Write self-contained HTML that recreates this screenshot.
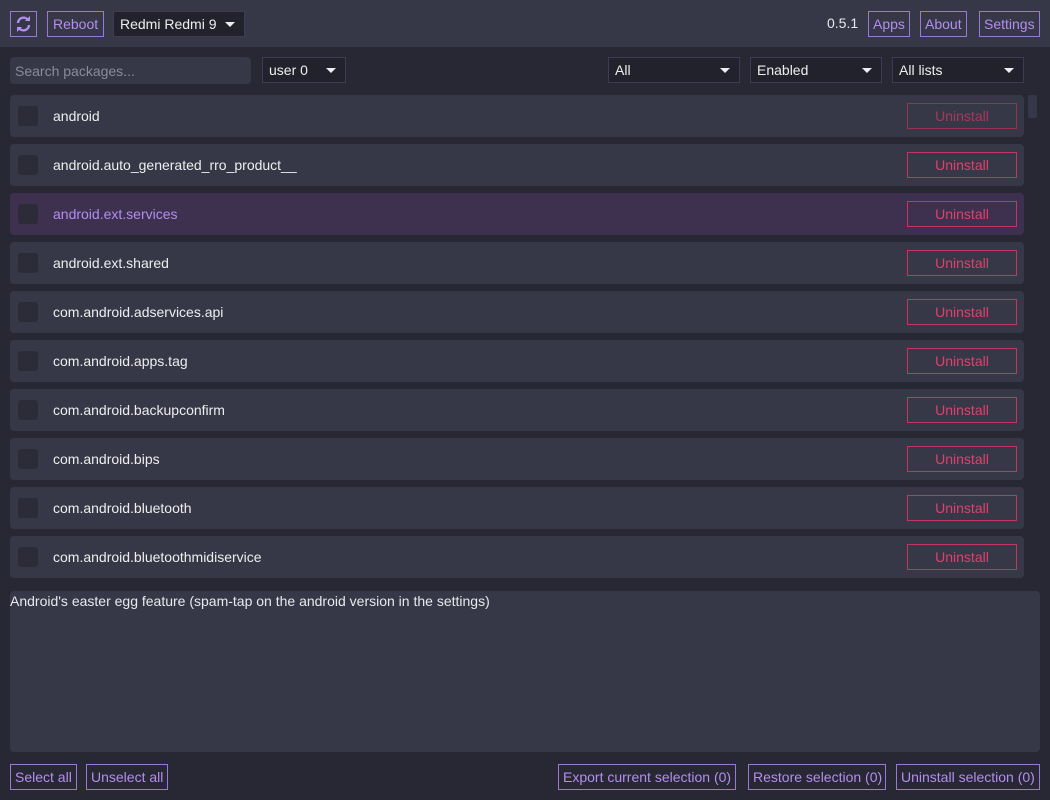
<!DOCTYPE html>
<html><head><style>
*{box-sizing:border-box;margin:0;padding:0}
body{width:1050px;height:800px;background:#272833;font-family:"Liberation Sans",sans-serif;font-size:14px;color:#e8e8ee;position:relative;overflow:hidden}
.abs{position:absolute}
.hdr{left:0;top:0;width:1050px;height:47px;background:#363847}
.btn{position:absolute;border:1px solid #9a78d6;color:#b48df0;height:26px;line-height:24px;padding:0 4px;font-size:14px;background:transparent;white-space:nowrap}
.sel{position:absolute;background:#21222c;border:1px solid #3f3a55;height:26px;line-height:25px;padding:0 6px;color:#eee;font-size:14px}
.sel:after{content:"";position:absolute;right:9px;top:10px;border-left:5px solid transparent;border-right:5px solid transparent;border-top:5px solid #eee}
.row{position:absolute;left:10px;width:1014px;height:42px;background:#363847;border-radius:4px}
.row .cb{position:absolute;left:8px;top:11px;width:20px;height:20px;background:#2b2c38;border-radius:3px}
.row .t{position:absolute;left:43px;top:13px;font-size:14px;color:#eee}
.row .u{position:absolute;left:897px;top:8px;width:110px;height:26px;border:1px solid #c23660;color:#e0406c;text-align:center;line-height:24px;font-size:14px}
.row.h{background:#3e3150}.row.h .t{color:#b48df0}
.row.d .u{color:#a8375a;border-color:#9a3050}
</style></head><body>
<div class="abs hdr"></div>
<div class="btn" style="left:10px;top:11px;width:27px;padding:0">
<svg width="25" height="24" viewBox="0 0 25 24"><g fill="none" stroke="#b48df0" stroke-width="2.4"><path d="M7 11a5.5 5.5 0 0 1 10-3"/><path d="M18 13a5.5 5.5 0 0 1-10 3"/></g><path d="M14 9h5V4z" fill="#b48df0"/><path d="M11 15H6v5z" fill="#b48df0"/></svg></div>
<div class="btn" style="left:47px;top:11px;padding:0 5px">Reboot</div>
<div class="sel" style="left:113px;top:11px;width:132px">Redmi Redmi 9</div>
<div class="abs" style="left:827px;top:15px">0.5.1</div>
<div class="btn" style="left:868px;top:11px">Apps</div>
<div class="btn" style="left:920px;top:11px">About</div>
<div class="btn" style="left:979px;top:11px">Settings</div>
<div class="abs" style="left:10px;top:57px;width:241px;height:27px;background:#363847;border-radius:4px;color:#8a8b98;padding:6px 5px">Search packages...</div>
<div class="sel" style="left:262px;top:57px;width:84px">user 0</div>
<div class="sel" style="left:608px;top:57px;width:132px">All</div>
<div class="sel" style="left:750px;top:57px;width:132px">Enabled</div>
<div class="sel" style="left:892px;top:57px;width:132px">All lists</div>
<div class="abs" style="left:1028px;top:95px;width:9px;height:23px;background:#363847;border-radius:2px"></div>
<div class="row d" style="top:95px"><div class="cb"></div><div class="t">android</div><div class="u">Uninstall</div></div>
<div class="row" style="top:144px"><div class="cb"></div><div class="t">android.auto_generated_rro_product__</div><div class="u">Uninstall</div></div>
<div class="row h" style="top:193px"><div class="cb"></div><div class="t">android.ext.services</div><div class="u">Uninstall</div></div>
<div class="row" style="top:242px"><div class="cb"></div><div class="t">android.ext.shared</div><div class="u">Uninstall</div></div>
<div class="row" style="top:291px"><div class="cb"></div><div class="t">com.android.adservices.api</div><div class="u">Uninstall</div></div>
<div class="row" style="top:340px"><div class="cb"></div><div class="t">com.android.apps.tag</div><div class="u">Uninstall</div></div>
<div class="row" style="top:389px"><div class="cb"></div><div class="t">com.android.backupconfirm</div><div class="u">Uninstall</div></div>
<div class="row" style="top:438px"><div class="cb"></div><div class="t">com.android.bips</div><div class="u">Uninstall</div></div>
<div class="row" style="top:487px"><div class="cb"></div><div class="t">com.android.bluetooth</div><div class="u">Uninstall</div></div>
<div class="row" style="top:536px"><div class="cb"></div><div class="t">com.android.bluetoothmidiservice</div><div class="u">Uninstall</div></div>
<div class="abs" style="left:10px;top:591px;width:1030px;height:161px;background:#363847;border-radius:4px;padding:2px 0 0 0">Android's easter egg feature (spam-tap on the android version in the settings)</div>
<div class="btn" style="left:10px;top:764px">Select all</div>
<div class="btn" style="left:86px;top:764px">Unselect all</div>
<div class="btn" style="left:558px;top:764px;width:178px">Export current selection (0)</div>
<div class="btn" style="left:748px;top:764px;width:138px">Restore selection (0)</div>
<div class="btn" style="left:896px;top:764px;width:144px">Uninstall selection (0)</div>
</body></html>
